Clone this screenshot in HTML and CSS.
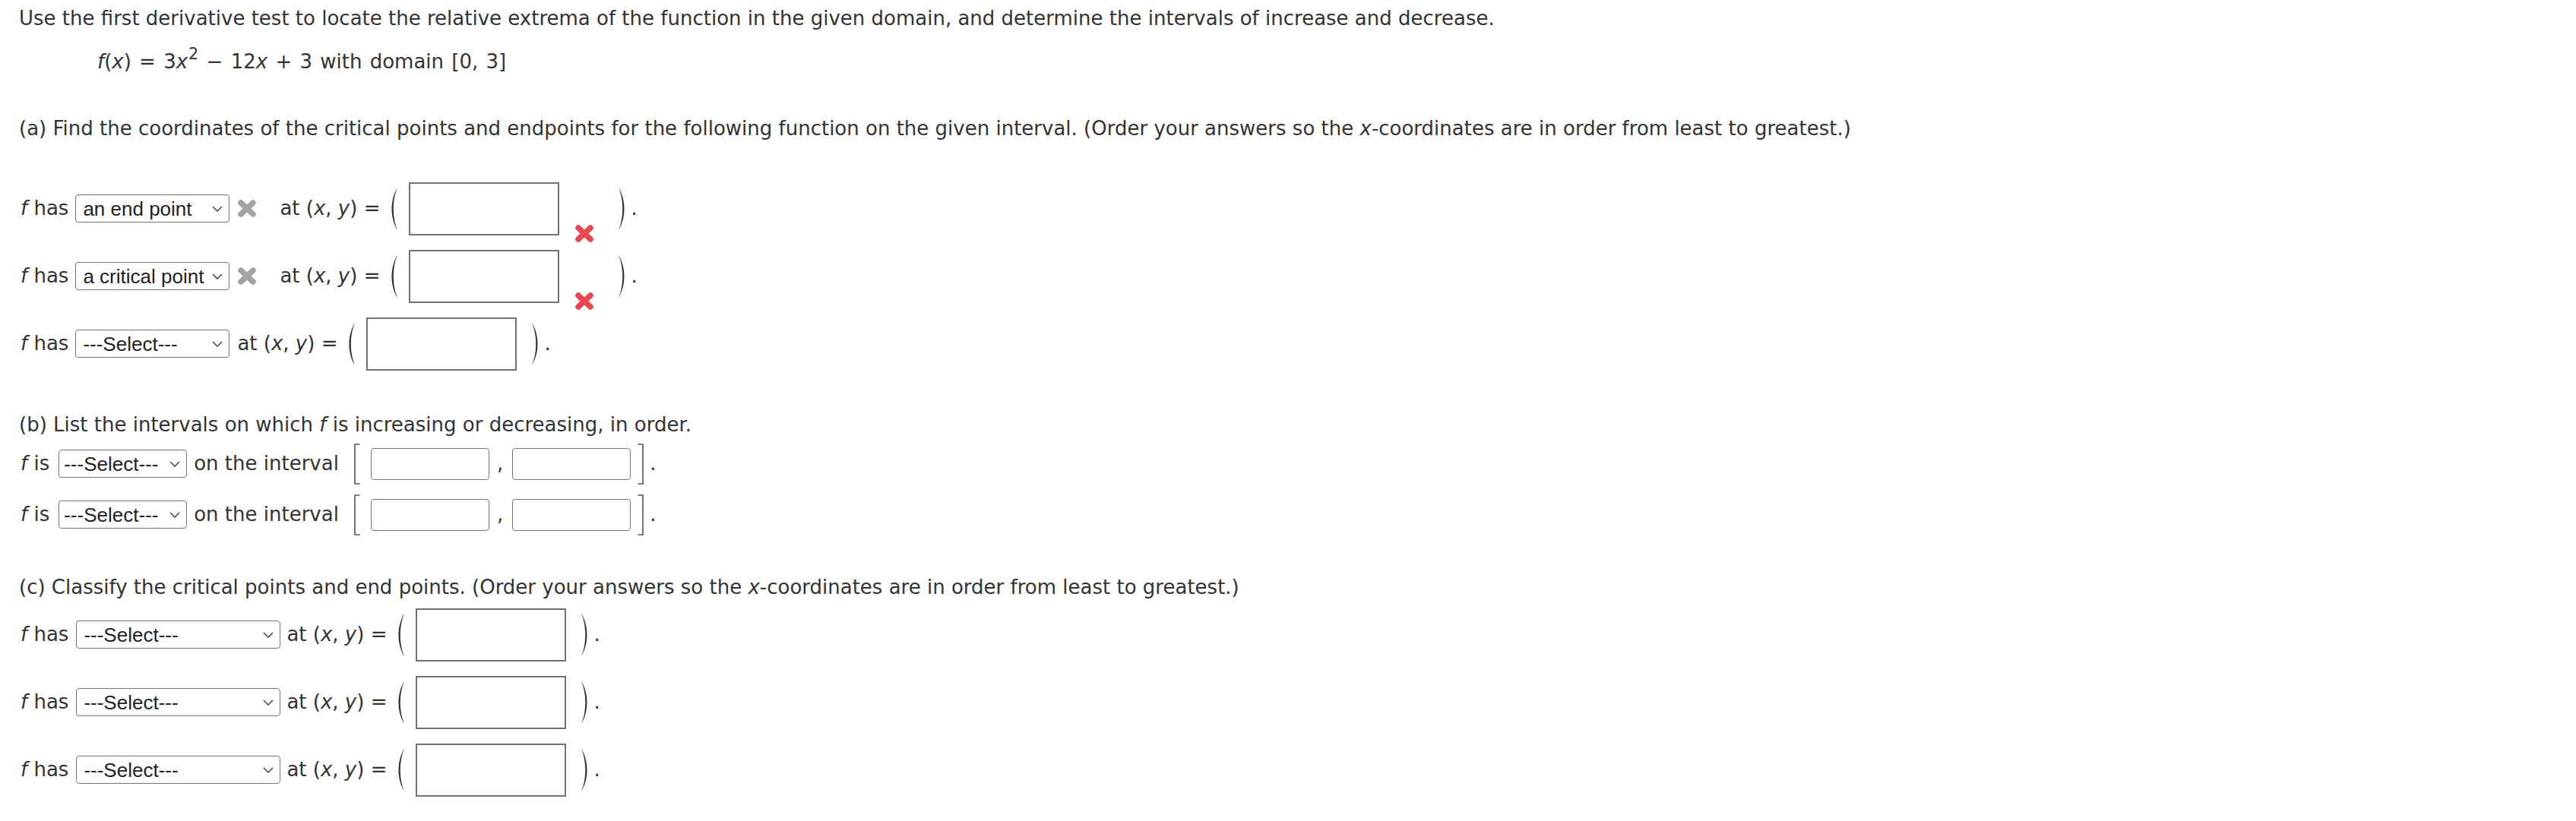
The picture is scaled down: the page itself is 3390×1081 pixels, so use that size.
FILE: index.html
```html
<!DOCTYPE html>
<html lang="en">
<head>
<meta charset="utf-8">
<title>First derivative test</title>
<link rel="stylesheet" href="styles.css">
</head>
<body>
<div class="page">
  <p class="intro">Use the first derivative test to locate the relative extrema of the function in the given domain, and determine the intervals of increase and decrease.</p>
  <p class="func"><i>f</i>(<i>x</i>) = 3<i>x</i><sup>2</sup> − 12<i>x</i> + 3 with domain [0, 3]</p>

  <p class="part part-a">(a) Find the coordinates of the critical points and endpoints for the following function on the given interval. (Order your answers so the <i>x</i>-coordinates are in order from least to greatest.)</p>

  <div class="row row-a">
    <span class="lbl"><i>f</i> has</span>
    <span class="sel sel-a"><select><option>an end point</option></select><svg class="chev" viewBox="0 0 14 8" width="14" height="8"><path d="M1 1 L7 7 L13 1" fill="none" stroke="#333" stroke-width="1.3"/></svg></span>
    <svg class="mark mark-grey" viewBox="0 0 26 25" width="26" height="25"><path d="M5 5 L21 20 M21 5 L5 20" stroke="#a3a3a3" stroke-width="7.5" stroke-linecap="round"/></svg>
    <span class="at">at (<i>x</i>, <i>y</i>) =</span>
    <svg class="paren" viewBox="0 0 14 58" width="14" height="58"><path d="M12 1 C2 17 2 41 12 57 C5 41 5 17 12 1 Z" fill="#333"/></svg>
    <input class="box" type="text">
    <svg class="mark mark-red" viewBox="0 0 26 25" width="26" height="25"><path d="M5 5 L21 20 M21 5 L5 20" stroke="#e8474f" stroke-width="7.5" stroke-linecap="round"/></svg>
    <svg class="paren paren-r" viewBox="0 0 14 58" width="14" height="58"><path d="M2 1 C12 17 12 41 2 57 C9 41 9 17 2 1 Z" fill="#333"/></svg>
    <span class="dot">.</span>
  </div>

  <div class="row row-a">
    <span class="lbl"><i>f</i> has</span>
    <span class="sel sel-a"><select><option>a critical point</option></select><svg class="chev" viewBox="0 0 14 8" width="14" height="8"><path d="M1 1 L7 7 L13 1" fill="none" stroke="#333" stroke-width="1.3"/></svg></span>
    <svg class="mark mark-grey" viewBox="0 0 26 25" width="26" height="25"><path d="M5 5 L21 20 M21 5 L5 20" stroke="#a3a3a3" stroke-width="7.5" stroke-linecap="round"/></svg>
    <span class="at">at (<i>x</i>, <i>y</i>) =</span>
    <svg class="paren" viewBox="0 0 14 58" width="14" height="58"><path d="M12 1 C2 17 2 41 12 57 C5 41 5 17 12 1 Z" fill="#333"/></svg>
    <input class="box" type="text">
    <svg class="mark mark-red" viewBox="0 0 26 25" width="26" height="25"><path d="M5 5 L21 20 M21 5 L5 20" stroke="#e8474f" stroke-width="7.5" stroke-linecap="round"/></svg>
    <svg class="paren paren-r" viewBox="0 0 14 58" width="14" height="58"><path d="M2 1 C12 17 12 41 2 57 C9 41 9 17 2 1 Z" fill="#333"/></svg>
    <span class="dot">.</span>
  </div>

  <div class="row row-a">
    <span class="lbl"><i>f</i> has</span>
    <span class="sel sel-a"><select><option>---Select---</option></select><svg class="chev" viewBox="0 0 14 8" width="14" height="8"><path d="M1 1 L7 7 L13 1" fill="none" stroke="#333" stroke-width="1.3"/></svg></span>
    <span class="at at-plain">at (<i>x</i>, <i>y</i>) =</span>
    <svg class="paren" viewBox="0 0 14 58" width="14" height="58"><path d="M12 1 C2 17 2 41 12 57 C5 41 5 17 12 1 Z" fill="#333"/></svg>
    <input class="box" type="text">
    <svg class="paren paren-r paren-near" viewBox="0 0 14 58" width="14" height="58"><path d="M2 1 C12 17 12 41 2 57 C9 41 9 17 2 1 Z" fill="#333"/></svg>
    <span class="dot">.</span>
  </div>

  <p class="part part-b">(b) List the intervals on which <i>f</i> is increasing or decreasing, in order.</p>

  <div class="row row-b">
    <span class="lbl"><i>f</i> is</span>
    <span class="sel sel-b"><select><option>---Select---</option></select><svg class="chev" viewBox="0 0 14 8" width="14" height="8"><path d="M1 1 L7 7 L13 1" fill="none" stroke="#333" stroke-width="1.3"/></svg></span>
    <span class="interval-lbl">on the interval</span>
    <svg class="brk" viewBox="0 0 10 54" width="10" height="54"><path d="M8.5 1 H2 V53 H8.5" fill="none" stroke="#555" stroke-width="1.6"/></svg>
    <input class="box-s" type="text">
    <span class="comma">,</span>
    <input class="box-s" type="text">
    <svg class="brk brk-r" viewBox="0 0 10 54" width="10" height="54"><path d="M1.5 1 H8 V53 H1.5" fill="none" stroke="#555" stroke-width="1.6"/></svg>
    <span class="dot dot-b">.</span>
  </div>

  <div class="row row-b">
    <span class="lbl"><i>f</i> is</span>
    <span class="sel sel-b"><select><option>---Select---</option></select><svg class="chev" viewBox="0 0 14 8" width="14" height="8"><path d="M1 1 L7 7 L13 1" fill="none" stroke="#333" stroke-width="1.3"/></svg></span>
    <span class="interval-lbl">on the interval</span>
    <svg class="brk" viewBox="0 0 10 54" width="10" height="54"><path d="M8.5 1 H2 V53 H8.5" fill="none" stroke="#555" stroke-width="1.6"/></svg>
    <input class="box-s" type="text">
    <span class="comma">,</span>
    <input class="box-s" type="text">
    <svg class="brk brk-r" viewBox="0 0 10 54" width="10" height="54"><path d="M1.5 1 H8 V53 H1.5" fill="none" stroke="#555" stroke-width="1.6"/></svg>
    <span class="dot dot-b">.</span>
  </div>

  <p class="part part-c">(c) Classify the critical points and end points. (Order your answers so the <i>x</i>-coordinates are in order from least to greatest.)</p>

  <div class="row row-c">
    <span class="lbl"><i>f</i> has</span>
    <span class="sel sel-c"><select><option>---Select---</option></select><svg class="chev" viewBox="0 0 14 8" width="14" height="8"><path d="M1 1 L7 7 L13 1" fill="none" stroke="#333" stroke-width="1.3"/></svg></span>
    <span class="at at-plain at-c">at (<i>x</i>, <i>y</i>) =</span>
    <svg class="paren" viewBox="0 0 14 58" width="14" height="58"><path d="M12 1 C2 17 2 41 12 57 C5 41 5 17 12 1 Z" fill="#333"/></svg>
    <input class="box" type="text">
    <svg class="paren paren-r paren-near" viewBox="0 0 14 58" width="14" height="58"><path d="M2 1 C12 17 12 41 2 57 C9 41 9 17 2 1 Z" fill="#333"/></svg>
    <span class="dot">.</span>
  </div>

  <div class="row row-c">
    <span class="lbl"><i>f</i> has</span>
    <span class="sel sel-c"><select><option>---Select---</option></select><svg class="chev" viewBox="0 0 14 8" width="14" height="8"><path d="M1 1 L7 7 L13 1" fill="none" stroke="#333" stroke-width="1.3"/></svg></span>
    <span class="at at-plain at-c">at (<i>x</i>, <i>y</i>) =</span>
    <svg class="paren" viewBox="0 0 14 58" width="14" height="58"><path d="M12 1 C2 17 2 41 12 57 C5 41 5 17 12 1 Z" fill="#333"/></svg>
    <input class="box" type="text">
    <svg class="paren paren-r paren-near" viewBox="0 0 14 58" width="14" height="58"><path d="M2 1 C12 17 12 41 2 57 C9 41 9 17 2 1 Z" fill="#333"/></svg>
    <span class="dot">.</span>
  </div>

  <div class="row row-c">
    <span class="lbl"><i>f</i> has</span>
    <span class="sel sel-c"><select><option>---Select---</option></select><svg class="chev" viewBox="0 0 14 8" width="14" height="8"><path d="M1 1 L7 7 L13 1" fill="none" stroke="#333" stroke-width="1.3"/></svg></span>
    <span class="at at-plain at-c">at (<i>x</i>, <i>y</i>) =</span>
    <svg class="paren" viewBox="0 0 14 58" width="14" height="58"><path d="M12 1 C2 17 2 41 12 57 C5 41 5 17 12 1 Z" fill="#333"/></svg>
    <input class="box" type="text">
    <svg class="paren paren-r paren-near" viewBox="0 0 14 58" width="14" height="58"><path d="M2 1 C12 17 12 41 2 57 C9 41 9 17 2 1 Z" fill="#333"/></svg>
    <span class="dot">.</span>
  </div>
</div>
</body>
</html>
```
FILE: styles.css
```css
html, body {
  margin: 0;
  padding: 0;
  background: #ffffff;
}
body {
  font-family: "DejaVu Sans", Verdana, sans-serif;
  font-size: 26px;
  color: #333333;
}
.page {
  padding: 6px 0 0 25px;
}
p {
  margin: 0;
  line-height: 36px;
  white-space: nowrap;
}
i {
  font-style: italic;
}
.func {
  margin-top: 21px;
  margin-left: 103px;
  word-spacing: 2px;
}
.func sup {
  font-size: 0.8em;
  line-height: 0;
  vertical-align: 0.6em;
  margin-left: 1px;
}
.part-a { margin-top: 52px; }
.part-b { margin-top: 44px; }
.part-c { margin-top: 44px; }

.row {
  display: flex;
  align-items: center;
  white-space: nowrap;
  line-height: 27px;
}
.row-a, .row-c { height: 89px; }
.row-b { height: 67px; }
.part-a + .row { margin-top: 43px; }

.lbl { margin-left: 2px; }

.sel {
  position: relative;
  display: inline-flex;
  margin-left: 9px;
}
.sel select {
  -webkit-appearance: none;
  appearance: none;
  font-family: "Liberation Sans", Arial, sans-serif;
  font-size: 26px;
  color: #222;
  background: #fff;
  height: 37px;
  border: 1px solid #767676;
  border-radius: 4px;
  padding: 0 26px 0 9px;
  margin: 0;
  outline: none;
}
.sel .chev {
  position: absolute;
  right: 9px;
  top: 15px;
  pointer-events: none;
}
.sel-a select { width: 203px; }
.sel-b { margin-left: 12px; }
.sel-b select { width: 169px; padding-left: 6px; }
.sel-c { margin-left: 10px; }
.sel-c select { width: 269px; }

.mark { flex: none; }
.mark-grey {
  margin-left: 10px;
  margin-right: 30px;
}
.mark-red {
  align-self: flex-end;
  margin-bottom: -1px;
  margin-left: 20px;
  margin-right: 30px;
}
.at-plain { margin-left: 10px; }
.at-c { margin-left: 8px; }

.paren { flex: none; margin-left: 11px; }
.paren-r { margin-left: 0; }
.paren-near { margin-left: 18px; }

.box {
  width: 198px;
  height: 70px;
  box-sizing: border-box;
  border: 2px solid #717171;
  border-radius: 0;
  margin: 0 0 0 13px;
  padding: 0;
  background: #fff;
  font: inherit;
}
.dot { margin-left: 4px; }

.interval-lbl { margin-left: 9px; }
.brk { flex: none; margin-left: 19px; }
.box-s {
  width: 156px;
  height: 42px;
  box-sizing: border-box;
  border: 1px solid #767676;
  border-radius: 4px;
  margin: 0 0 0 13px;
  padding: 0;
  background: #fff;
  font: inherit;
}
.comma { margin-left: 10px; margin-right: 12px; }
.comma + .box-s { margin-left: 0; }
.brk-r { margin-left: 8px; }
.dot-b { margin-left: 7px; }
```
